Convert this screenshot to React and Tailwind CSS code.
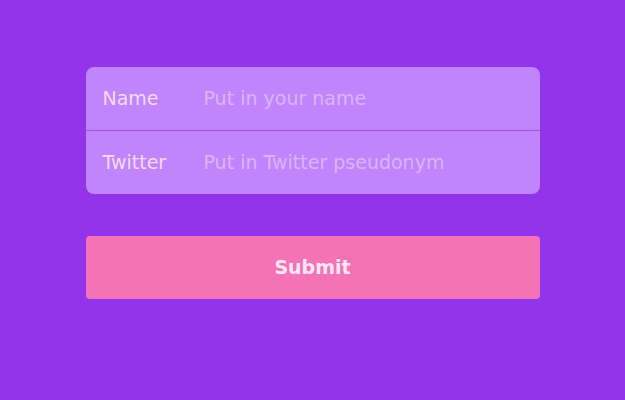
export default function App() {
  return (
    <div className="min-h-[400px] bg-[#9333ea] pt-[67px]" style={{ fontFamily: '"DejaVu Sans", sans-serif' }}>
      <form className="mx-auto w-[454px]" onSubmit={(e) => e.preventDefault()}>
        <div className="rounded-lg bg-[#c084fc] overflow-hidden">
          <label className="flex items-center h-[64px] px-[17px] border-b border-[#a24ef0]">
            <span className="w-[101px] text-[19px] text-[#f5d9fe]">Name</span>
            <input
              className="flex-1 bg-transparent text-[19px] text-white outline-none placeholder:text-[#dbb4fe]"
              placeholder="Put in your name"
            />
          </label>
          <label className="flex items-center h-[63px] px-[17px]">
            <span className="w-[101px] text-[19px] text-[#f5d9fe]">Twitter</span>
            <input
              className="flex-1 bg-transparent text-[19px] text-white outline-none placeholder:text-[#dbb4fe]"
              placeholder="Put in Twitter pseudonym"
            />
          </label>
        </div>
        <button
          type="submit"
          className="mt-[42px] w-full h-[63px] rounded bg-[#f472b6] text-[19px] font-bold text-[#fce7f3]"
        >
          Submit
        </button>
      </form>
    </div>
  );
}
